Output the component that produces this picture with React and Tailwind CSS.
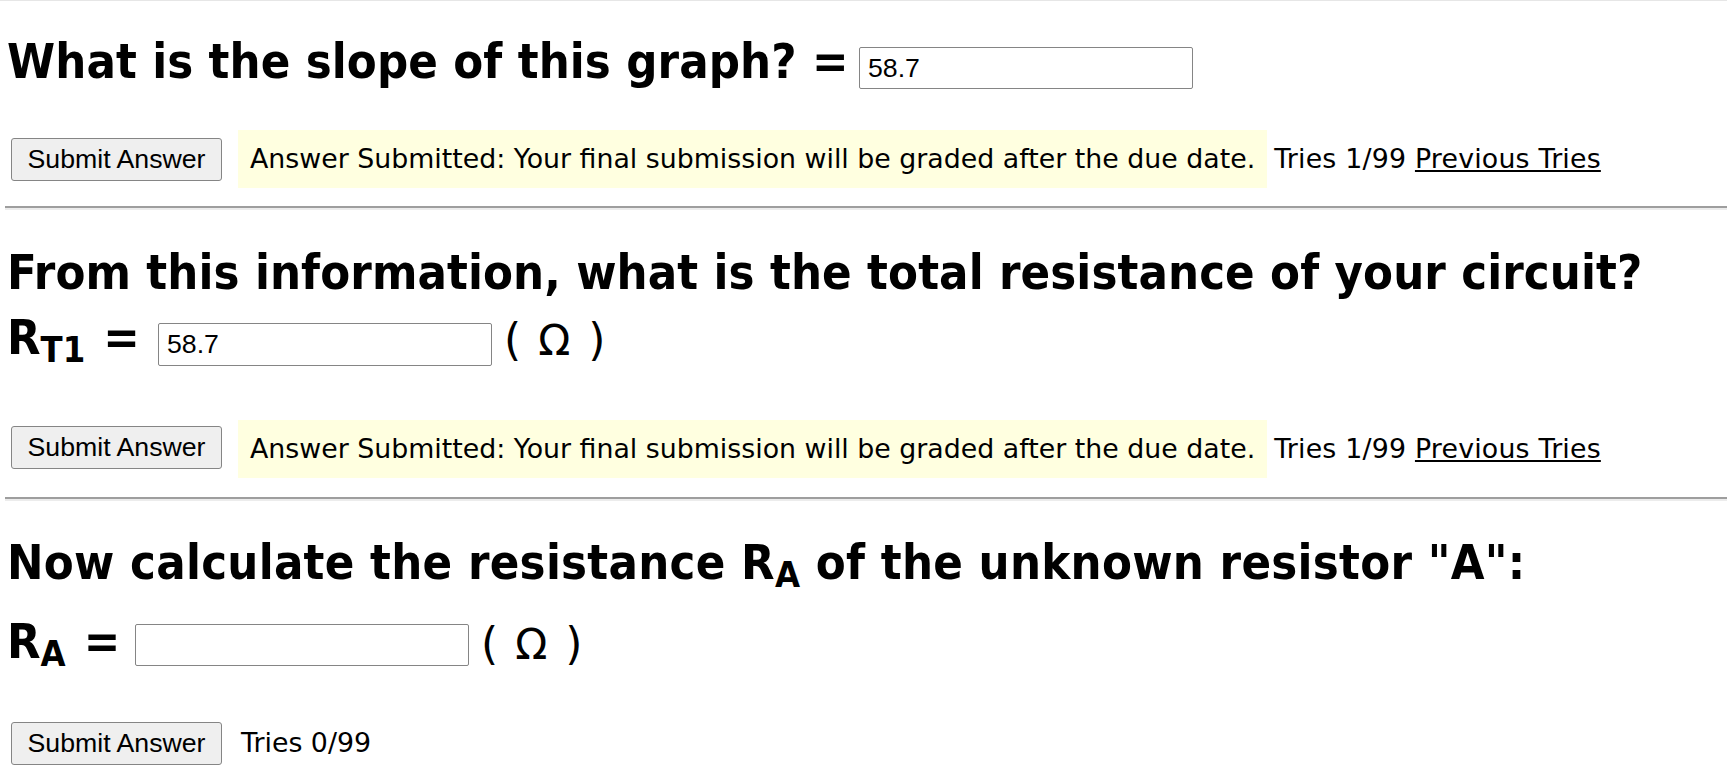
import React from "react";

const H = "font-['DejaVu_Sans_Condensed','DejaVu_Sans',sans-serif] font-stretch-condensed font-bold text-[48.5px] leading-[49px] text-black whitespace-nowrap";
const T = "font-['DejaVu_Sans',sans-serif] text-[26.8px] text-black whitespace-nowrap";
const INPUT = "w-[334px] border border-[#858585] rounded-[2px] bg-white px-[8px] font-['Liberation_Sans',Arial,sans-serif] text-[26.7px] text-black outline-none";

function SubmitButton({ className = "" }) {
  return (
    <button
      type="button"
      className={`w-[211px] h-[43px] shrink-0 bg-[#efefef] border border-[#858585] rounded-[3px] font-['Liberation_Sans',Arial,sans-serif] text-[26.7px] text-black leading-none ${className}`}
    >
      Submit Answer
    </button>
  );
}

function Submitted() {
  return (
    <>
      <div className={`${T} ml-[16px] mt-[24px] h-[58px] bg-[#ffffe0] px-[12px] flex items-center`}>
        Answer Submitted: Your final submission will be graded after the due date.
      </div>
      <div className={`${T} ml-[7px] mt-[24px] h-[58px] flex items-center tracking-[0.2px]`}>
        Tries 1/99&nbsp;<a href="#" className="underline text-black">Previous Tries</a>
      </div>
    </>
  );
}

function Unit() {
  return (
    <div className="flex items-baseline font-['DejaVu_Sans',sans-serif] text-black ml-[12px]">
      <span className="text-[44px] leading-[44px]">(</span>
      <span className="text-[42px] leading-[44px] ml-[17px]">Ω</span>
      <span className="text-[44px] leading-[44px] ml-[18px]">)</span>
    </div>
  );
}

function Hr() {
  return (
    <div className="ml-[5px]">
      <div className="h-[2px] bg-[#9e9e9e]" />
      <div className="h-[2px] bg-[#ececec]" />
    </div>
  );
}

export default function App() {
  return (
    <div className="w-[1727px] h-[783px] bg-white overflow-hidden">
      <div className="h-px bg-[#e6e6e6]" />

      {/* Question 1 */}
      <div className="flex items-start h-[105px] pl-[7px]">
        <h2 className={`${H} mt-[36px] w-[852px] tracking-[0.1px]`}>What is the slope of this graph? =</h2>
        <input className={`${INPUT} mt-[46px] h-[42px]`} defaultValue="58.7" />
      </div>
      <div className="flex items-start h-[100px]">
        <SubmitButton className="ml-[11px] mt-[32px]" />
        <Submitted />
      </div>
      <Hr />

      {/* Question 2 */}
      <div className="h-[95px] pl-[7px]">
        <h2 className={`${H} pt-[38px] tracking-[0.1px]`}>
          From this information, what is the total resistance of your circuit?
        </h2>
      </div>
      <div className="flex items-start h-[95px] pl-[7px]">
        <div className={`${H} mt-[8px] w-[151px] flex items-baseline`}>
          <span>R</span>
          <span className="text-[36px] leading-none relative top-[8px]">T1</span>
          <span className="ml-[18px]">=</span>
        </div>
        <input className={`${INPUT} mt-[18px] h-[43px]`} defaultValue="58.7" />
        <div className="mt-[13px]">
          <Unit />
        </div>
      </div>
      <div className="flex items-start h-[97px]">
        <SubmitButton className="ml-[11px] mt-[26px]" />
        <div className="flex items-start -mt-[4px]">
          <Submitted />
        </div>
      </div>
      <Hr />

      {/* Question 3 */}
      <div className="h-[99px] pl-[7px]">
        <h2 className={`${H} pt-[37px] tracking-[0.28px]`}>
          Now calculate the resistance R<span className="text-[36px] leading-none align-[-8px]">A</span> of the unknown resistor "A":
        </h2>
      </div>
      <div className="flex items-start h-[100px] pl-[7px]">
        <div className={`${H} mt-[17px] w-[128px] flex items-baseline`}>
          <span>R</span>
          <span className="text-[36px] leading-none relative top-[8px]">A</span>
          <span className="ml-[18px]">=</span>
        </div>
        <input className={`${INPUT} mt-[24px] h-[42px]`} defaultValue="" />
        <div className="mt-[22px]">
          <Unit />
        </div>
      </div>
      <div className="flex items-start">
        <SubmitButton className="ml-[11px] mt-[22px]" />
        <div className={`${T} ml-[19px] mt-[22px] h-[43px] flex items-center`}>Tries 0/99</div>
      </div>
    </div>
  );
}
